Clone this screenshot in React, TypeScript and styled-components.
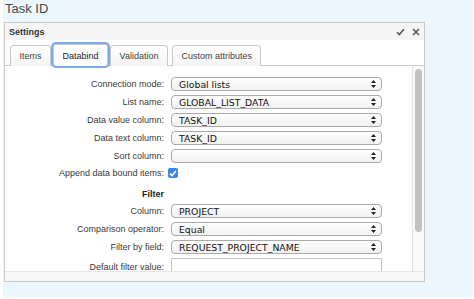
import React from "react";
import styled, { createGlobalStyle } from "styled-components";

const Global = createGlobalStyle`
  body {
    margin: 0;
    background: #ffffff;
    font-family: "Liberation Sans", Arial, sans-serif;
  }
`;

const Page = styled.div`
  margin-left: 3px;
  width: 470px;
  height: 297px;
  background: #ebf6fd;
  display: flex;
  flex-direction: column;
`;

const Title = styled.div`
  height: 22px;
  padding-left: 2px;
  font-size: 13px;
  line-height: 18px;
  color: #4a4a4a;
`;

const Panel = styled.div`
  margin-left: 1px;
  width: 419px;
  height: 258px;
  border: 1px solid #c9c9c9;
  background: #ffffff;
  display: flex;
  flex-direction: column;
`;

const Header = styled.div`
  height: 17px;
  flex: none;
  display: flex;
  align-items: center;
  padding: 0 4px 0 4px;
  background: #f5f5f5;
`;

const HeaderTitle = styled.div`
  flex: 1;
  font-size: 9px;
  font-weight: bold;
  color: #333;
`;

const HeaderIcons = styled.div`
  display: flex;
  gap: 7px;
  align-items: center;
`;

const TabStrip = styled.div`
  height: 26px;
  flex: none;
  display: flex;
  align-items: flex-end;
  padding-left: 5px;
  border-bottom: 1px solid #cccccc;
  box-sizing: border-box;
`;

const Tab = styled.div<{ $active?: boolean; $gap?: number }>`
  box-sizing: border-box;
  padding: 0 8.5px;
  margin-right: ${(p) => p.$gap ?? 2}px;
  margin-bottom: -1px;
  display: flex;
  align-items: center;
  font-size: 9px;
  color: ${(p) => (p.$active ? "#222" : "#444")};
  border: 1px solid #c8c8c8;
  border-bottom: none;
  background: ${(p) => (p.$active ? "#ffffff" : "linear-gradient(#ffffff, #f4f4f4)")};
  box-shadow: ${(p) => (p.$active ? "0 0 0 2px #7aaaf0" : "none")};
  border-radius: ${(p) => (p.$active ? "3px" : "4px 4px 0 0")};
  height: ${(p) => (p.$active ? "22px" : "21px")};
`;

const Body = styled.div`
  flex: 1;
  display: flex;
  min-height: 0;
`;

const Content = styled.div`
  flex: 1;
  overflow: hidden;
  padding-top: 11px;
`;

const Form = styled.div`
  display: grid;
  grid-template-columns: 159px 214px;
  column-gap: 4px;
  row-gap: 4px;
  align-items: center;
`;

const Label = styled.div<{ $short?: boolean }>`
  text-align: right;
  font-size: 9px;
  line-height: ${(p) => (p.$short ? 12 : 14)}px;
  color: #3a3a3a;
  white-space: nowrap;
`;

const Heading = styled.div`
  grid-column: 1;
  margin-top: 5px;
  text-align: right;
  font-size: 9px;
  font-weight: bold;
  color: #222;
  line-height: 12px;
`;

const Select = styled.div`
  margin-left: 3px;
  height: 14px;
  box-sizing: border-box;
  border: 1px solid #a9a9a9;
  border-radius: 4px;
  background: linear-gradient(#ffffff, #f1f1f1);
  display: flex;
  align-items: center;
  padding: 0 5px 0 7px;
  font-family: "DejaVu Sans", Verdana, sans-serif;
  font-size: 9.3px;
  color: #111;
`;

const SelectText = styled.span`
  flex: 1;
  white-space: nowrap;
`;

const TextInput = styled.div`
  margin-left: 3px;
  align-self: start;
  height: 18px;
  box-sizing: border-box;
  border: 1px solid #c4c4c4;
  background: #fff;
`;

const CheckBox = styled.div`
  width: 10px;
  height: 10px;
  border-radius: 2px;
  background: #3a87e6;
  display: flex;
  align-items: center;
  justify-content: center;
`;

const Track = styled.div`
  width: 12px;
  flex: none;
  box-sizing: border-box;
  border-left: 1px solid #e2e2e2;
  background: #fafafa;
  padding: 3px 0 0 2px;
`;

const Thumb = styled.div`
  width: 7px;
  height: 163px;
  border-radius: 4px;
  background: #c2c2c2;
`;

const Footer = styled.div`
  height: 9px;
  flex: none;
  border-top: 1px solid #e6e6e6;
  background: #f8f8f8;
`;

const Arrows = () => (
  <svg width="5" height="8" viewBox="0 0 5 8">
    <path d="M2.5 0 L5 3 L0 3 Z M0 5 L5 5 L2.5 8 Z" fill="#222" />
  </svg>
);

const Field = ({ value }: { value: string }) => (
  <Select>
    <SelectText>{value}</SelectText>
    <Arrows />
  </Select>
);

const rows: [string, string][] = [
  ["Connection mode:", "Global lists"],
  ["List name:", "GLOBAL_LIST_DATA"],
  ["Data value column:", "TASK_ID"],
  ["Data text column:", "TASK_ID"],
  ["Sort column:", ""],
];

const filterRows: [string, string][] = [
  ["Column:", "PROJECT"],
  ["Comparison operator:", "Equal"],
  ["Filter by field:", "REQUEST_PROJECT_NAME"],
];

export default function App() {
  return (
    <>
      <Global />
      <Page>
        <Title>Task ID</Title>
        <Panel>
          <Header>
            <HeaderTitle>Settings</HeaderTitle>
            <HeaderIcons>
              <svg width="9" height="8" viewBox="0 0 9 8">
                <path d="M1 4.3 L3.3 6.6 L8 1.2" stroke="#555" strokeWidth="1.6" fill="none" />
              </svg>
              <svg width="8" height="8" viewBox="0 0 8 8">
                <path d="M1 1 L7 7 M7 1 L1 7" stroke="#555" strokeWidth="1.5" />
              </svg>
            </HeaderIcons>
          </Header>
          <TabStrip>
            <Tab>Items</Tab>
            <Tab $active>Databind</Tab>
            <Tab $gap={4}>Validation</Tab>
            <Tab>Custom attributes</Tab>
          </TabStrip>
          <Body>
            <Content>
              <Form>
                {rows.map(([label, value]) => (
                  <React.Fragment key={label}>
                    <Label>{label}</Label>
                    <Field value={value} />
                  </React.Fragment>
                ))}
                <Label $short>Append data bound items:</Label>
                <CheckBox>
                  <svg width="8" height="7" viewBox="0 0 8 7">
                    <path d="M1 3.6 L3 5.6 L7 1" stroke="#fff" strokeWidth="1.5" fill="none" />
                  </svg>
                </CheckBox>
                <Heading>Filter</Heading>
                <div />
                {filterRows.map(([label, value]) => (
                  <React.Fragment key={label}>
                    <Label>{label}</Label>
                    <Field value={value} />
                  </React.Fragment>
                ))}
                <Label>Default filter value:</Label>
                <TextInput />
              </Form>
            </Content>
            <Track>
              <Thumb />
            </Track>
          </Body>
          <Footer />
        </Panel>
      </Page>
    </>
  );
}
